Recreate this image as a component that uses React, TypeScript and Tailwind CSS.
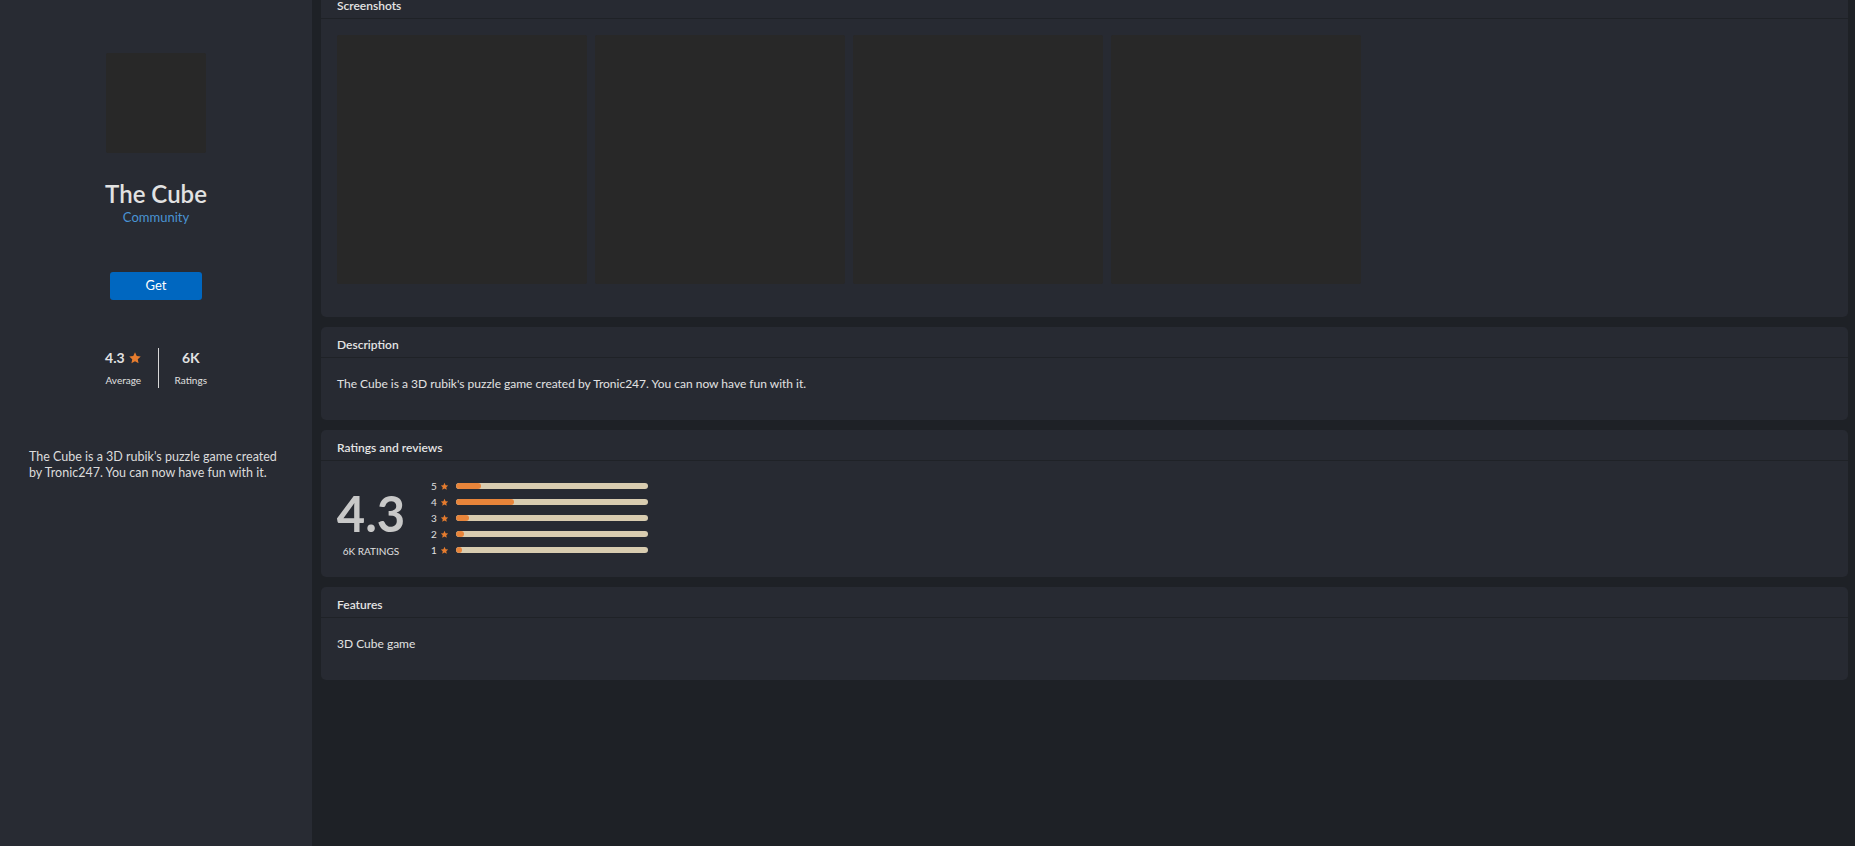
import React from "react";

const Star = ({ className }: { className?: string }) => (
  <svg viewBox="0 0 24 24" className={className} fill="currentColor">
    <path d="M12 2.2l2.95 6.3 6.85.8-5.08 4.7 1.37 6.8L12 17.4l-6.09 3.4 1.37-6.8L2.2 9.3l6.85-.8z" />
  </svg>
);

const bars = [
  { n: 5, p: 13 },
  { n: 4, p: 30 },
  { n: 3, p: 7 },
  { n: 2, p: 4 },
  { n: 1, p: 3 },
];

function Card({ title, children, bodyClass }: { title: string; children: React.ReactNode; bodyClass: string }) {
  return (
    <section className="rounded-[5px] bg-[#272a32]">
      <div className="border-b border-[#1f2227] px-4 pt-[10px] pb-[4px] text-[12px] leading-4 font-semibold text-[#e4e4e4]">
        {title}
      </div>
      <div className={bodyClass}>{children}</div>
    </section>
  );
}

export default function App() {
  return (
    <div
      className="flex h-[846px] w-full overflow-hidden bg-[#1e2126] text-[#e6e6e6]"
      style={{ fontFamily: "Lato, 'Open Sans', sans-serif" }}
    >
      <aside className="flex w-[312px] shrink-0 flex-col items-center bg-[#282b33] pt-[53px]">
        <div className="h-[100px] w-[100px] rounded-[2px] bg-[#282828]" />
        <h1 className="mt-[27px] text-[24px] leading-[28px] font-semibold text-[#e2e2e2]">The Cube</h1>
        <div className="text-[13px] leading-[18px] text-[#4a94d4]">Community</div>
        <button className="mt-[46px] h-[28px] w-[92px] rounded-[3px] bg-[#0067c0] text-[13px] text-white">Get</button>
        <div className="mt-[48px] flex">
          <div className="flex flex-col items-center px-4">
            <div className="flex items-center gap-[3px] text-[14px] leading-5 font-bold text-[#e2e2e2]">
              4.3
              <Star className="h-[14px] w-[14px] text-[#e67c2e]" />
            </div>
            <div className="mt-[4px] text-[10px] leading-4 text-[#e0e0e0]">Average</div>
          </div>
          <div className="w-px bg-[#d8d8d8]" />
          <div className="flex flex-col items-center px-4">
            <div className="text-[14px] leading-5 font-bold text-[#e2e2e2]">6K</div>
            <div className="mt-[4px] text-[10px] leading-4 text-[#e0e0e0]">Ratings</div>
          </div>
        </div>
        <p className="mt-[61px] w-full px-[29px] text-[12.5px] leading-4 text-[#dcdcdc]">
          The Cube is a 3D rubik's puzzle game created by Tronic247. You can now have fun with it.
        </p>
      </aside>

      <main className="flex min-w-0 flex-1 flex-col gap-[10px] pl-[9px] pr-[7px] -mt-[12px]">
        <Card title="Screenshots" bodyClass="flex gap-2 px-4 pt-4 pb-[33px]">
          {[0, 1, 2, 3].map((i) => (
            <div key={i} className="h-[249px] w-[250px] rounded-[2px] bg-[#282828]" />
          ))}
        </Card>

        <Card title="Description" bodyClass="px-4 pt-[18px] pb-[28px] text-[12px] leading-4 text-[#e2e2e2]">
          The Cube is a 3D rubik's puzzle game created by Tronic247. You can now have fun with it.
        </Card>

        <Card title="Ratings and reviews" bodyClass="flex items-center px-4 pt-4 pb-[18px]">
          <div className="flex w-[68px] flex-col items-center pt-[14px]">
            <div className="text-[49px] leading-[44px] font-bold text-[#c8c8c8]">4.3</div>
            <div className="mt-[8px] text-[10px] leading-4 text-[#e0e0e0]">6K RATINGS</div>
          </div>
          <div className="ml-[26px] flex flex-col">
            {bars.map((b) => (
              <div key={b.n} className="flex h-4 items-center">
                <span className="w-[6px] text-[10px] leading-4 text-[#e0e0e0]">{b.n}</span>
                <Star className="ml-[3px] h-[9px] w-[9px] text-[#e67c2e]" />
                <div className="ml-[7px] h-[6px] w-[192px] overflow-hidden rounded-full bg-[#d8ccb0]">
                  <div className="h-full rounded-full bg-[#e8843a]" style={{ width: `${b.p}%` }} />
                </div>
              </div>
            ))}
          </div>
        </Card>

        <Card title="Features" bodyClass="px-4 pt-[18px] pb-[28px] text-[12px] leading-4 text-[#e2e2e2]">
          3D Cube game
        </Card>
      </main>
    </div>
  );
}
